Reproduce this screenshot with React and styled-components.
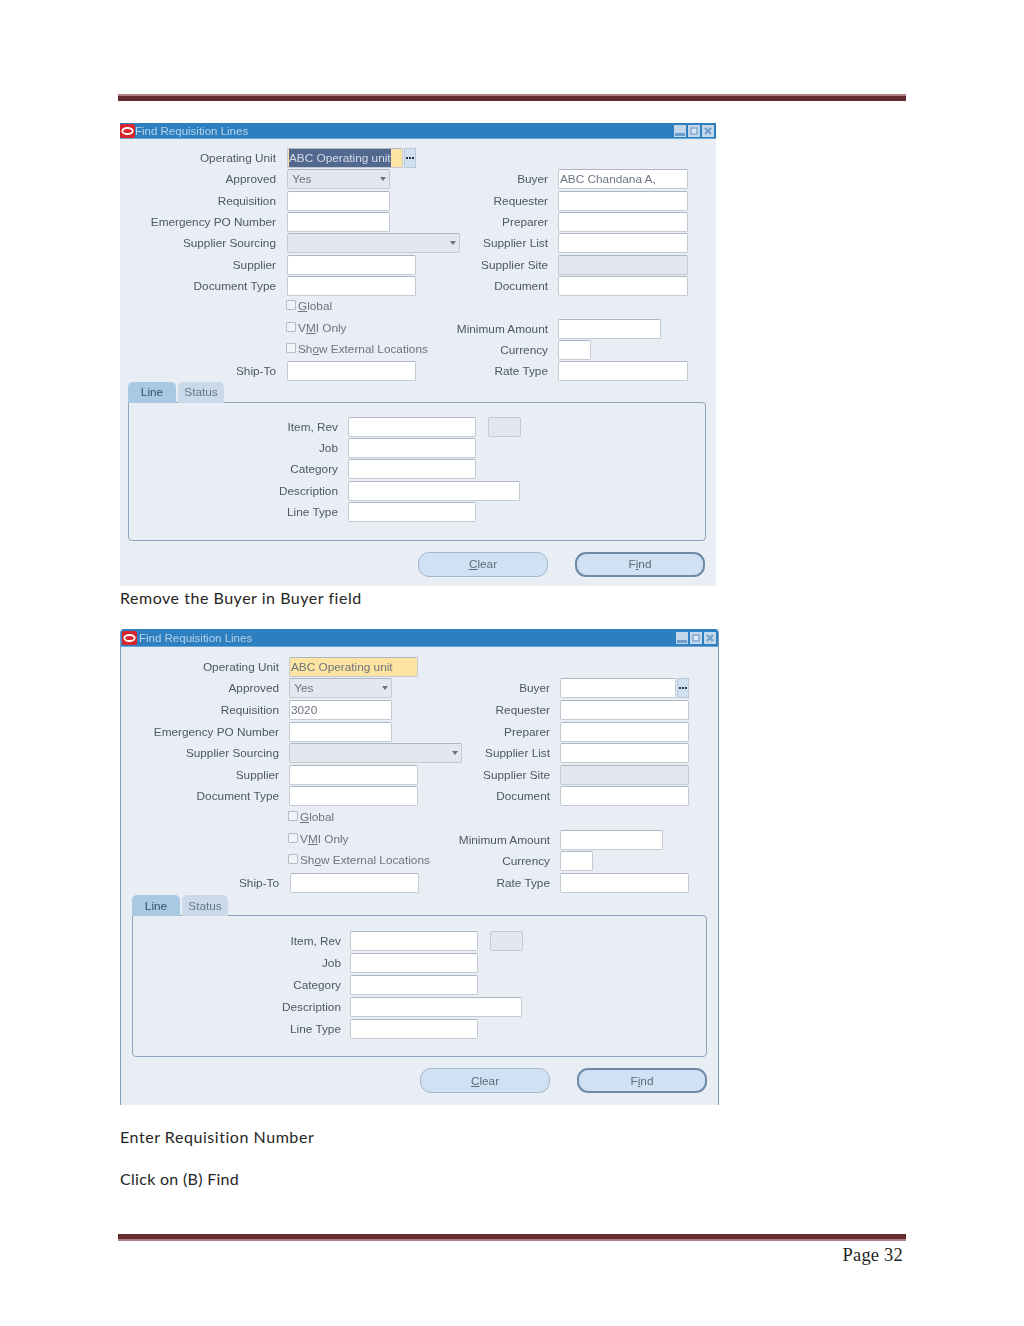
import React from "react";
import styled, { createGlobalStyle } from "styled-components";

const Global = createGlobalStyle`
  html, body { margin: 0; background: #fff; }
`;

const Page = styled.div`
  width: 1024px;
  height: 1326px;
  box-sizing: border-box;
  padding: 94px 118px 0;
  font-family: "Liberation Sans", Arial, sans-serif;
  overflow: hidden;
`;

const Rule = styled.div`
  height: 7px;
  box-sizing: border-box;
  background: #642c2e;
  border-${(p) => (p.$flip ? "bottom" : "top")}: 2px solid #b08082;
`;

const BottomBlock = styled.footer`
  margin-top: 45px;
`;

const Caption = styled.p`
  margin: ${(p) => p.$top}px 0 0 2px;
  font-family: Lato, "Open Sans", sans-serif;
  font-size: 16px;
  line-height: 20px;
  letter-spacing: ${(p) => p.$track}px;
  color: #262626;
`;

const PageNo = styled.div`
  margin: 3px 3px 0 0;
  text-align: right;
  font-family: "Liberation Serif", serif;
  font-size: 18.5px;
  line-height: 22px;
  letter-spacing: 0.2px;
  color: #1f1f1f;
`;

const Window = styled.section`
  width: ${(p) => p.$w}px;
  height: ${(p) => p.$h}px;
  margin: ${(p) => p.$top}px 0 0 2px;
  box-sizing: border-box;
  background: #e9eef5;
  filter: blur(0.35px);
  border-radius: ${(p) => (p.$framed ? "4px 4px 0 0" : "0")};
  border-left: ${(p) => (p.$framed ? "1px solid #7f9bbd" : "0")};
  border-right: ${(p) => (p.$framed ? "1px solid #7f9bbd" : "0")};
  overflow: hidden;
`;

const TitleBar = styled.header`
  height: ${(p) => p.$h}px;
  display: flex;
  align-items: center;
  gap: ${(p) => p.$gap}px;
  background: #2e7fbf;
  border-bottom: 1px solid #6aa6d6;
  box-sizing: border-box;
  padding: 0 2px 0 ${(p) => p.$left}px;
`;

const OracleMark = styled.svg`
  width: 15px;
  height: 14px;
  flex: none;
`;

const TitleText = styled.span`
  flex: 1;
  font-size: 11.5px;
  color: #b4d3ec;
`;

const Controls = styled.div`
  display: flex;
  gap: 2px;
`;

const ControlIcon = styled.svg`
  width: 12px;
  height: 12px;
  display: block;
`;

const Form = styled.div`
  display: grid;
  grid-template-columns: ${(p) => p.$labelW}px ${(p) => p.$gap}px ${(p) => p.$midW}px 93px 10px 140px;
  grid-auto-rows: ${(p) => p.$pitch}px;
  padding-top: ${(p) => p.$pad}px;
  align-items: center;
`;

const Label = styled.label`
  grid-column: ${(p) => p.$col};
  font-size: 11.8px;
  color: #4b5866;
  text-align: right;
  white-space: nowrap;
  justify-self: end;
`;

const Cell = styled.div`
  grid-column: ${(p) => p.$col};
  display: flex;
  align-items: center;
  gap: 1px;
  min-width: 0;
  white-space: nowrap;
  margin-left: ${(p) => p.$shift || 0}px;
`;

const Field = styled.div`
  width: ${(p) => p.$w}px;
  height: 20px;
  flex: none;
  box-sizing: border-box;
  display: flex;
  align-items: center;
  justify-content: space-between;
  padding: 0 2px 0 1px;
  background: ${(p) =>
    p.$tone === "grey" ? "#e3e7ee" : p.$tone === "yellow" ? "#fde4a0" : "#fff"};
  border: 1px solid #c3cad4;
  border-top-color: #aeb6c1;
  border-radius: 2px;
  font-size: 11.8px;
  color: #6d7580;
`;

const Selected = styled.span`
  background: #52688f;
  color: #d5deea;
  margin: -2px 0 -2px 0;
  padding: 2px 0;
`;

const Caret = styled.i`
  width: 0;
  height: 0;
  margin-right: 1px;
  border-left: 3.5px solid transparent;
  border-right: 3.5px solid transparent;
  border-top: 4px solid #6b7480;
`;

const LovButton = styled.div`
  width: 12px;
  height: 20px;
  box-sizing: border-box;
  flex: none;
  background: #cfe0f1;
  border: 1px solid #bcc8d6;
  display: flex;
  align-items: center;
  justify-content: center;
  gap: 1px;
`;

const LovDot = styled.i`
  width: 2px;
  height: 2px;
  background: #2c3540;
`;

const CheckRow = styled.span`
  display: flex;
  align-items: center;
  gap: 2px;
  font-size: 11.8px;
  color: #6b7480;
  margin: -2px 0 0 -1px;
`;

const Box = styled.i`
  width: 10px;
  height: 10px;
  box-sizing: border-box;
  flex: none;
  background: #f1f4f8;
  border: 1px solid #b5bcc7;
  border-radius: 1px;
  margin-top: -2px;
`;

const Tabs = styled.div`
  display: flex;
  gap: 2px;
  margin: ${(p) => p.$top}px 0 0 ${(p) => p.$left}px;
  height: 20px;
`;

const Tab = styled.div`
  width: ${(p) => (p.$active ? 48 : 46)}px;
  height: 21px;
  box-sizing: border-box;
  border-radius: 5px 5px 0 0;
  display: flex;
  align-items: center;
  justify-content: center;
  font-size: 11.8px;
  color: ${(p) => (p.$active ? "#35506b" : "#66788c")};
  background: ${(p) => (p.$active ? "#a9c8e2" : "#cbdaea")};
`;

const Panel = styled.div`
  width: ${(p) => p.$w}px;
  height: ${(p) => p.$h}px;
  box-sizing: border-box;
  margin-left: ${(p) => p.$left}px;
  border: 1px solid #8ea4bc;
  border-radius: 0 4px 4px 4px;
  padding-top: ${(p) => p.$pad}px;
`;

const PanelGrid = styled.div`
  display: grid;
  grid-template-columns: ${(p) => p.$labelW}px ${(p) => p.$gap}px 1fr;
  grid-auto-rows: ${(p) => p.$pitch}px;
  align-items: center;
`;

const Ghost = styled.div`
  width: 33px;
  height: 20px;
  box-sizing: border-box;
  margin-left: 11px;
  background: #e3e7ee;
  border: 1px solid #c3cad4;
  border-radius: 2px;
  flex: none;
`;

const Buttons = styled.div`
  display: flex;
  gap: ${(p) => p.$gap}px;
  padding: ${(p) => p.$top}px 0 0 ${(p) => p.$left}px;
`;

const Button = styled.div`
  width: 130px;
  height: 25px;
  box-sizing: border-box;
  border-radius: 11px;
  background: #cfe1f3;
  display: flex;
  align-items: center;
  justify-content: center;
  font-size: 11.8px;
  color: #5d6c7c;
  border: ${(p) => (p.$default ? "2px solid #6f8aa6" : "1px solid #a3b6cb")};
`;

const Oracle = () => (
  <OracleMark viewBox="0 0 15 14">
    <rect width="15" height="14" rx="2" fill="#d9262c" />
    <ellipse cx="7.5" cy="7" rx="5.2" ry="3" fill="none" stroke="#fff" strokeWidth="1.8" />
  </OracleMark>
);

const Control = ({ kind }) => (
  <ControlIcon viewBox="0 0 12 12">
    <rect width="12" height="12" fill="#c2d7ea" />
    {kind === "min" && <rect x="1" y="8" width="10" height="3" fill="#6f9fcb" />}
    {kind === "max" && <rect x="3" y="3" width="6" height="6" fill="#dbe7f2" stroke="#6f9fcb" strokeWidth="1.2" />}
    {kind === "close" && <path d="M3 3l6 6M9 3l-6 6" stroke="#6f9fcb" strokeWidth="2" />}
  </ControlIcon>
);

const Lov = () => (
  <LovButton>
    <LovDot />
    <LovDot />
    <LovDot />
  </LovButton>
);

const FindWindow = ({ v }) => (
  <Window $w={v.w} $h={v.h} $top={v.top} $framed={v.framed}>
    <TitleBar $h={v.titleH} $left={v.titleLeft} $gap={v.titleGap}>
      <Oracle />
      <TitleText>Find Requisition Lines</TitleText>
      <Controls>
        <Control kind="min" />
        <Control kind="max" />
        <Control kind="close" />
      </Controls>
    </TitleBar>
    <Form $labelW={v.labelW} $gap={v.formGap} $midW={v.midW} $pitch={v.pitch} $pad={v.formPad}>
      <Label $col={1}>Operating Unit</Label>
      <Cell $col={3}>
        {v.selected ? (
          <>
            <Field $w={116} $tone="yellow"><Selected>ABC Operating unit</Selected></Field>
            <Lov />
          </>
        ) : (
          <Field $w={129} $tone="yellow">ABC Operating unit</Field>
        )}
      </Cell>

      <Label $col={1}>Approved</Label>
      <Cell $col={3}><Field $w={103} $tone="grey">&nbsp;Yes<Caret /></Field></Cell>
      <Label $col={4}>Buyer</Label>
      <Cell $col={6}>
        {v.selected ? (
          <Field $w={v.rightW}>ABC Chandana A,</Field>
        ) : (
          <>
            <Field $w={116} />
            <Lov />
          </>
        )}
      </Cell>

      <Label $col={1}>Requisition</Label>
      <Cell $col={3}><Field $w={103}>{v.requisition}</Field></Cell>
      <Label $col={4}>Requester</Label>
      <Cell $col={6}><Field $w={v.rightW} /></Cell>

      <Label $col={1}>Emergency PO Number</Label>
      <Cell $col={3}><Field $w={103} /></Cell>
      <Label $col={4}>Preparer</Label>
      <Cell $col={6}><Field $w={v.rightW} /></Cell>

      <Label $col={1}>Supplier Sourcing</Label>
      <Cell $col={3}><Field $w={173} $tone="grey"><span /><Caret /></Field></Cell>
      <Label $col={4}>Supplier List</Label>
      <Cell $col={6}><Field $w={v.rightW} /></Cell>

      <Label $col={1}>Supplier</Label>
      <Cell $col={3}><Field $w={129} /></Cell>
      <Label $col={4}>Supplier Site</Label>
      <Cell $col={6}><Field $w={v.rightW} $tone="grey" /></Cell>

      <Label $col={1}>Document Type</Label>
      <Cell $col={3}><Field $w={129} /></Cell>
      <Label $col={4}>Document</Label>
      <Cell $col={6}><Field $w={v.rightW} /></Cell>

      <Cell $col={3}><CheckRow><Box /><span><u>G</u>lobal</span></CheckRow></Cell>
      <Cell $col={6} />

      <Cell $col={3}><CheckRow><Box /><span>V<u>M</u>I Only</span></CheckRow></Cell>
      <Label $col={4}>Minimum Amount</Label>
      <Cell $col={6}><Field $w={103} /></Cell>

      <Cell $col={3}><CheckRow><Box /><span>Sh<u>o</u>w External Locations</span></CheckRow></Cell>
      <Label $col={4}>Currency</Label>
      <Cell $col={6}><Field $w={33} /></Cell>

      <Label $col={1}>Ship-To</Label>
      <Cell $col={3} $shift={v.shipShift}><Field $w={129} /></Cell>
      <Label $col={4}>Rate Type</Label>
      <Cell $col={6}><Field $w={v.rightW} /></Cell>
    </Form>
    <Tabs $top={v.tabTop} $left={v.tabLeft}>
      <Tab $active>Line</Tab>
      <Tab>Status</Tab>
    </Tabs>
    <Panel $w={v.panelW} $h={v.panelH} $left={v.tabLeft} $pad={v.panelPad}>
      <PanelGrid $pitch={v.panelPitch} $labelW={v.panelLabelW} $gap={v.panelGap}>
        <Label $col={1}>Item, Rev</Label>
        <Cell $col={3}><Field $w={128} /><Ghost /></Cell>
        <Label $col={1}>Job</Label>
        <Cell $col={3}><Field $w={128} /></Cell>
        <Label $col={1}>Category</Label>
        <Cell $col={3}><Field $w={128} /></Cell>
        <Label $col={1}>Description</Label>
        <Cell $col={3}><Field $w={172} /></Cell>
        <Label $col={1}>Line Type</Label>
        <Cell $col={3}><Field $w={128} /></Cell>
      </PanelGrid>
    </Panel>
    <Buttons $top={v.btnTop} $left={v.btnLeft} $gap={v.btnGap}>
      <Button><span><u>C</u>lear</span></Button>
      <Button $default><span>F<u>i</u>nd</span></Button>
    </Buttons>
  </Window>
);

const first = {
  w: 596, h: 463, top: 22, titleH: 16, titleLeft: 0, titleGap: 0, labelW: 156, formGap: 11,
  midW: 168, rightW: 130, shipShift: 0, pitch: 21.3, formPad: 8.5, selected: true,
  requisition: "", tabTop: 0, tabLeft: 8, panelW: 578, panelH: 139, panelPad: 13.5,
  panelPitch: 21.25, panelLabelW: 209, panelGap: 10, btnTop: 11, btnLeft: 298, btnGap: 27,
};

const second = {
  w: 599, h: 476, top: 21, titleH: 18, titleLeft: 1, titleGap: 2, framed: true, labelW: 158,
  formGap: 10, midW: 168, rightW: 129, shipShift: 1, pitch: 21.6, formPad: 9, selected: false,
  requisition: "3020", tabTop: 1.5, tabLeft: 11, panelW: 575, panelH: 142, panelPad: 14.5,
  panelPitch: 21.8, panelLabelW: 208, panelGap: 9, btnTop: 11, btnLeft: 299, btnGap: 27,
};

export default function App() {
  return (
    <>
      <Global />
      <Page>
        <Rule />
        <FindWindow v={first} />
        <Caption $top={2} $track={0.52}>Remove the Buyer in Buyer field</Caption>
        <FindWindow v={second} />
        <Caption $top={22} $track={0.55}>Enter Requisition Number</Caption>
        <Caption $top={22} $track={0.3}>Click on (B) Find</Caption>
        <BottomBlock>
          <Rule $flip />
          <PageNo>Page 32</PageNo>
        </BottomBlock>
      </Page>
    </>
  );
}
